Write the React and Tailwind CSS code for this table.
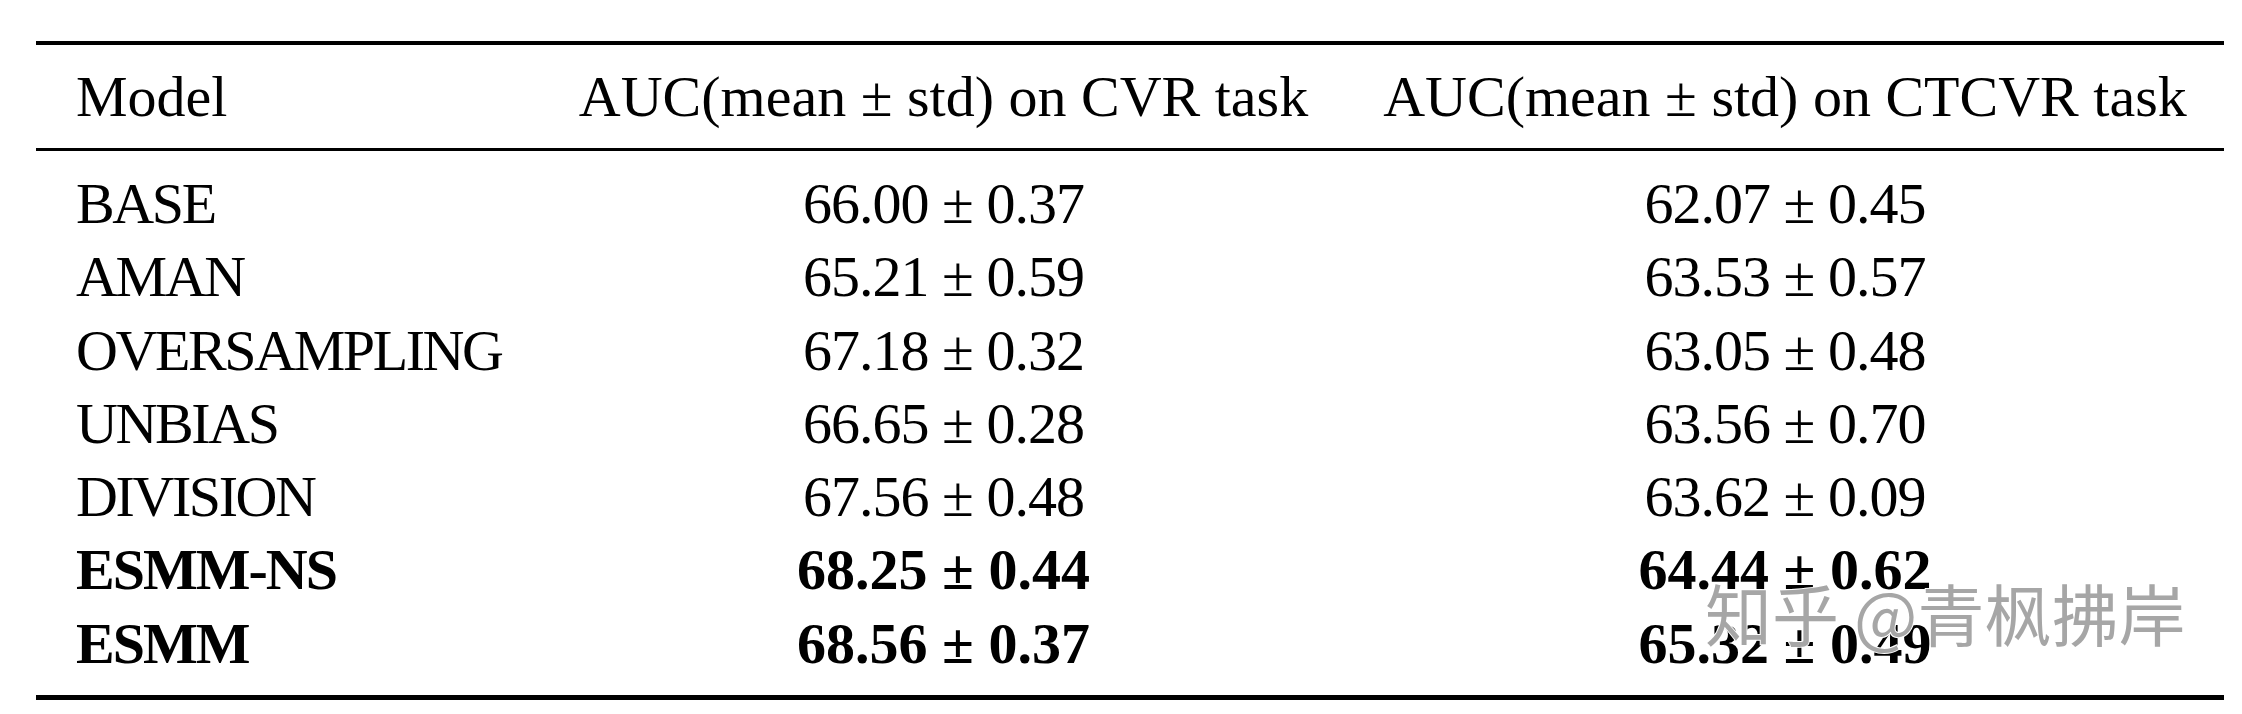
const rows = [
  { name: 'BASE', cvr: '66.00 ± 0.37', ctcvr: '62.07 ± 0.45' },
  { name: 'AMAN', cvr: '65.21 ± 0.59', ctcvr: '63.53 ± 0.57' },
  { name: 'OVERSAMPLING', cvr: '67.18 ± 0.32', ctcvr: '63.05 ± 0.48' },
  { name: 'UNBIAS', cvr: '66.65 ± 0.28', ctcvr: '63.56 ± 0.70' },
  { name: 'DIVISION', cvr: '67.56 ± 0.48', ctcvr: '63.62 ± 0.09' },
  { name: 'ESMM-NS', cvr: '68.25 ± 0.44', ctcvr: '64.44 ± 0.62', bold: true },
  { name: 'ESMM', cvr: '68.56 ± 0.37', ctcvr: '65.32 ± 0.49', bold: true },
];

const cols = 'grid grid-cols-[505px_805px_878px]';

export default function App() {
  return (
    <div className="relative w-[2242px] h-[714px] bg-white text-black font-['Liberation_Serif','Times_New_Roman',serif] text-[58px]">
      <div className="ml-[36px] w-[2188px] pt-[41px]">
        <div className="h-[4px] bg-black" />

        {/* header */}
        <div className={`${cols} pt-[15px] pb-[15px] leading-[73px]`}>
          <div className="pl-[40px]">Model</div>
          <div className="text-center">AUC(mean ± std) on CVR task</div>
          <div className="text-center">AUC(mean ± std) on CTCVR task</div>
        </div>

        <div className="h-[3px] bg-black" />

        {/* body */}
        <div className="pt-[16px] pb-[15px]">
          {rows.map((r) => (
            <div
              key={r.name}
              className={`${cols} leading-[73.3px] ${r.bold ? 'font-bold' : ''}`}
            >
              <div className={`pl-[40px] ${r.bold ? 'tracking-[-2px]' : 'tracking-[-2.4px]'}`}>{r.name}</div>
              <div className={`text-center ${r.bold ? '' : 'tracking-[-1px]'}`}>{r.cvr}</div>
              <div className={`text-center ${r.bold ? '' : 'tracking-[-1px]'}`}>{r.ctcvr}</div>
            </div>
          ))}
        </div>

        <div className="h-[5px] bg-black" />
      </div>

      {/* watermark */}
      <div className="absolute left-[1705px] top-[578px] text-[67px] leading-none text-[#a6a6a6] font-['Noto_Sans_CJK_SC',sans-serif] [-webkit-text-stroke:2px_white] [paint-order:stroke_fill] whitespace-nowrap">
        知乎 @青枫拂岸
      </div>
    </div>
  );
}
